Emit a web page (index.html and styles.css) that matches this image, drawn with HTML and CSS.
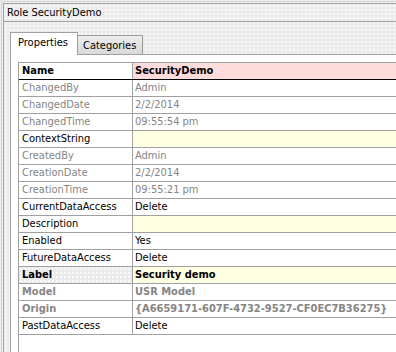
FILE: index.html
```html
<!DOCTYPE html>
<html>
<head>
<meta charset="utf-8">
<link rel="stylesheet" href="styles.css">
</head>
<body>
<div class="outer">
  <div class="window">
    <div class="title">Role SecurityDemo</div>
    <div class="content">
      <div class="tabs">
        <div class="tab active">Properties</div>
        <div class="tab inactive">Categories</div>
      </div>
      <div class="panel">
        <div class="grid">
          <div class="row name-row"><div class="key bold">Name</div><div class="val bold pink">SecurityDemo</div></div>
          <div class="row ro"><div class="key">ChangedBy</div><div class="val">Admin</div></div>
          <div class="row ro"><div class="key">ChangedDate</div><div class="val">2/2/2014</div></div>
          <div class="row ro"><div class="key">ChangedTime</div><div class="val">09:55:54 pm</div></div>
          <div class="row"><div class="key">ContextString</div><div class="val yellow"></div></div>
          <div class="row ro"><div class="key">CreatedBy</div><div class="val">Admin</div></div>
          <div class="row ro"><div class="key">CreationDate</div><div class="val">2/2/2014</div></div>
          <div class="row ro"><div class="key">CreationTime</div><div class="val">09:55:21 pm</div></div>
          <div class="row"><div class="key">CurrentDataAccess</div><div class="val">Delete</div></div>
          <div class="row"><div class="key">Description</div><div class="val yellow"></div></div>
          <div class="row"><div class="key">Enabled</div><div class="val">Yes</div></div>
          <div class="row"><div class="key">FutureDataAccess</div><div class="val">Delete</div></div>
          <div class="row"><div class="key bold speckle">Label</div><div class="val bold yellow">Security demo</div></div>
          <div class="row ro"><div class="key bold">Model</div><div class="val bold">USR Model</div></div>
          <div class="row ro"><div class="key bold">Origin</div><div class="val bold">{A6659171-607F-4732-9527-CF0EC7B36275}</div></div>
          <div class="row"><div class="key">PastDataAccess</div><div class="val">Delete</div></div>
        </div>
      </div>
    </div>
  </div>
</div>
</body>
</html>
```

FILE: styles.css
```css
html, body {
  margin: 0;
  padding: 0;
}
body {
  width: 396px;
  height: 352px;
  overflow: hidden;
  font-family: "DejaVu Sans Condensed", "DejaVu Sans", sans-serif;
  font-size: 11px;
  color: #000;
  background-color: #ebebeb;
  background-image:
    radial-gradient(circle, #fafafa 0.7px, transparent 0.9px),
    radial-gradient(circle, #f6f6f6 0.6px, transparent 0.8px);
  background-size: 4px 4px, 5px 5px;
  background-position: 0 0, 2px 1px;
  box-sizing: border-box;
  padding: 1px 0 0 1px;
}
.outer {
  height: 351px;
  box-sizing: border-box;
  border-top: 1px solid #d2d2d2;
  border-left: 1px solid #d2d2d2;
  padding: 1px 0 0 1px;
}
.window {
  height: 349px;
  box-sizing: border-box;
  border-top: 1px solid #a0a0a0;
  border-left: 1px solid #a0a0a0;
  display: flex;
  flex-direction: column;
}
.title {
  flex: none;
  height: 16px;
  padding: 1px 0 0 3px;
  line-height: 16px;
  border-bottom: 1px solid #a0a0a0;
}
.content {
  flex: 1;
  display: flex;
  flex-direction: column;
  padding: 10px 0 0 6px;
}
.tabs {
  display: flex;
  align-items: flex-end;
  height: 22px;
  flex: none;
}
.tab {
  box-sizing: border-box;
  line-height: 16px;
  white-space: nowrap;
}
.tab.active {
  width: 68px;
  height: 23px;
  margin-bottom: -1px;
  padding: 2px 0 0 7px;
  background: #fff;
  border: 1px solid #a0a0a0;
  border-bottom: none;
  position: relative;
  z-index: 1;
}
.tab.inactive {
  width: 65px;
  height: 19px;
  padding: 2px 0 0 5px;
  background: linear-gradient(#ededed, #d9d9d9);
  border: 1px solid #9a9a9a;
  border-bottom: none;
  border-left: none;
}
.panel {
  flex: 1;
  background: #fff;
  border-top: 1px solid #a0a0a0;
  border-left: 1px solid #a0a0a0;
  padding: 7px 0 0 7px;
  display: flex;
  flex-direction: column;
}
.grid {
  flex: 1;
  border-top: 1px solid #a0a0a0;
  border-left: 1px solid #a0a0a0;
}
.row {
  display: grid;
  grid-template-columns: 114px 1fr;
  border-bottom: 1px solid #a0a0a0;
  height: 16px;
  line-height: 16px;
  white-space: nowrap;
}
.row.name-row {
  border-bottom-color: #000;
}
.key {
  box-sizing: border-box;
  border-right: 1px solid #a0a0a0;
  padding-left: 3px;
  overflow: hidden;
}
.val {
  padding-left: 2px;
}
.ro {
  color: #858585;
}
.bold {
  font-weight: bold;
}
.pink {
  background: #ffdcdc;
}
.yellow {
  background: #ffffe1;
}
.speckle {
  background-color: #ebebeb;
  background-image: radial-gradient(circle, #fafafa 0.7px, transparent 0.9px);
  background-size: 4px 4px;
}
```
